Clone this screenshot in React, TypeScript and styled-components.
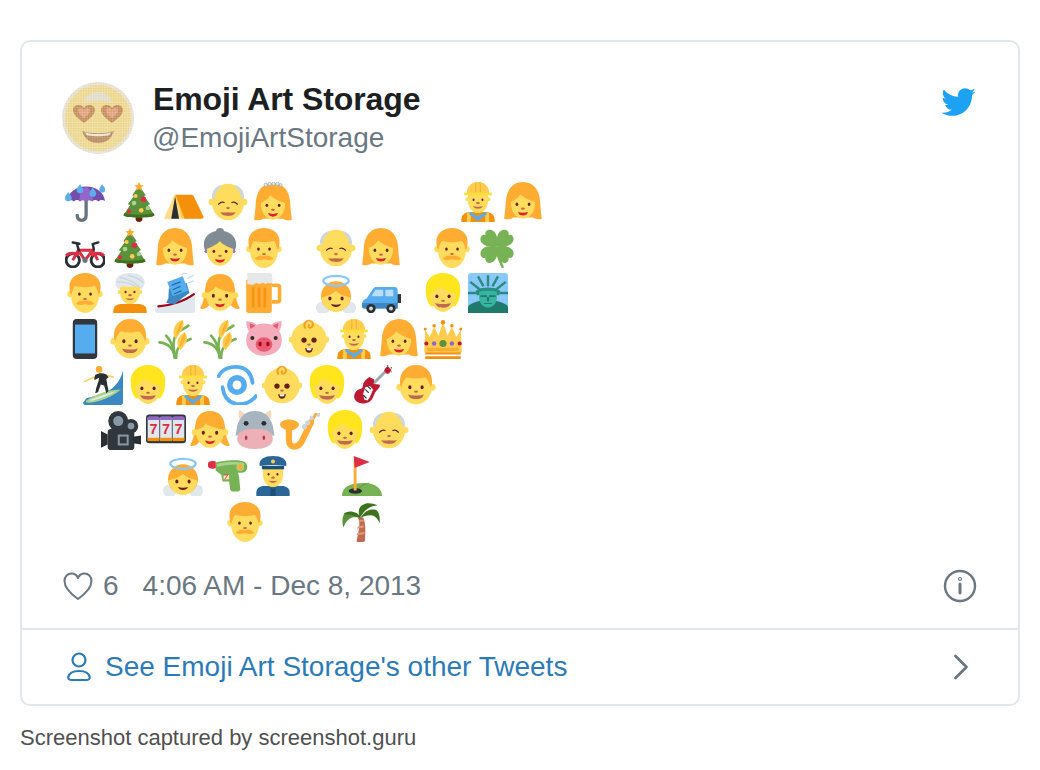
import React from 'react';
import styled, { createGlobalStyle } from 'styled-components';

const Global = createGlobalStyle`
  html, body { margin: 0; background: #fff; }
  body { font-family: "Liberation Sans", Arial, sans-serif; }
`;
const Page = styled.main`
  width: 1000px;
  padding: 40px 20px 0;
`;
const Card = styled.article`
  border: 2px solid #e1e8ed;
  border-radius: 10px;
  height: 666px;
  box-sizing: border-box;
  display: flex;
  flex-direction: column;
`;
const Content = styled.div`
  padding: 40px 40px 0;
  height: 588px;
  box-sizing: border-box;
  border-bottom: 2px solid #e1e8ed;
  flex: none;
`;
const Header = styled.header`
  display: flex;
  align-items: flex-start;
  height: 72px;
`;
const Avatar = styled.svg`
  width: 72px;
  height: 72px;
  flex: none;
`;
const Author = styled.div`
  margin-left: 18px;
  flex: 1;
`;
const Name = styled.div`
  font-size: 32px;
  line-height: 34px;
  font-weight: 700;
  letter-spacing: -0.1px;
  margin-left: 1px;
  color: #1c2022;
`;
const Handle = styled.div`
  font-size: 28px;
  line-height: 36px;
  margin-top: 4px;
  color: #697882;
`;
const Bird = styled.svg`
  width: 36px;
  height: 36px;
  margin-top: 2px;
  margin-right: 2px;
  fill: #1da1f2;
`;
const Art = styled.div`
  margin-top: 26px;
  font-size: 32px;
  line-height: 45.7px;
  white-space: pre;
  height: 368px;
`;
const ArtLine = styled.div`
  height: 45.7px;
`;
const Glyph = styled.svg`
  width: 40px;
  height: 40px;
  margin: 0 1.6px 0 3.2px;
  vertical-align: -9px;
`;
const Meta = styled.footer`
  display: flex;
  align-items: center;
  margin-top: 22px;
  height: 32px;
  font-size: 28px;
  color: #697882;
`;
const Count = styled.span`
  margin-left: 9px;
  margin-right: 24px;
`;
const Time = styled.time`
  flex: 1;
`;
const InfoIcon = styled.svg`
  margin-right: 1px;
`;
const LinkRow = styled.a`
  flex: 1;
  display: flex;
  align-items: center;
  padding: 0 49px 0 45px;
  font-size: 28px;
  color: #2b7bb9;
`;
const LinkText = styled.span`
  flex: 1;
  margin-left: 14px;
`;
const Caption = styled.p`
  margin: 20px 0 0;
  font-size: 22px;
  line-height: 24px;
  color: #505050;
`;

const SK = '#FFDC5D', HR = '#FFAC33', MO = '#C1694F', EY = '#662113', BL = '#FFE51E', LP = '#DF1F32';

const Eyes = ({ y = 20, a = 12.5, b = 23.5, r = 1.4 }: { y?: number; a?: number; b?: number; r?: number }) => (
  <g fill={EY}>
    <ellipse cx={a} cy={y} rx={r} ry={r * 1.25} />
    <ellipse cx={b} cy={y} rx={r} ry={r * 1.25} />
  </g>
);
const Smile = ({ y = 27 }: { y?: number }) => (
  <path fill={MO} d={`M11 ${y}c3 1.300 11 1.300 14 0-1 3.400-3.800 4.200-7 4.200s-6-.8-7-4.200z`} />
);
const Nose = ({ y = 24 }: { y?: number }) => <ellipse cx="18" cy={y} rx="1.700" ry="1" fill={MO} />;
const Lips = ({ y = 28 }: { y?: number }) => (
  <path fill={LP} d={`M13.500 ${y}c2.500 1 6.500 1 9 0-.6 2.200-2.200 3.200-4.500 3.200s-3.900-1-4.500-3.200z`} />
);

const Man = () => (
  <>
    <circle cx="4.800" cy="19" r="2.800" fill={SK} />
    <circle cx="31.200" cy="19" r="2.800" fill={SK} />
    <path fill={SK} d="M5.500 12h25v9c0 8-5.800 15-12.500 15S5.500 29 5.500 21z" />
    <path fill={HR} d="M18 0C10 0 4 5 4 12c0 3 .5 6 1.500 8 1-3 1.500-6 3.500-8 5 1 13 1 18 0 2 2 2.500 5 3.500 8 1-2 1.500-5 1.500-8C32 5 26 0 18 0z" />
    <Eyes y={19} a={13} b={23} r={1.200} />
    <Nose y={23.500} />
    <path fill={HR} d="M18 25.500c-2.500-1.500-6-.5-8.500 2.500 3 1.200 6.500 1 8.500 0 2 1 5.500 1.200 8.500 0-2.500-3-6-4-8.500-2.500z" />
  </>
);
const Boy = () => (
  <>
    <circle cx="3.500" cy="20" r="3.200" fill={SK} />
    <circle cx="32.500" cy="20" r="3.200" fill={SK} />
    <ellipse cx="18" cy="19" rx="14.500" ry="16.500" fill={SK} />
    <path fill={HR} d="M18 0C9 0 3.500 7 3.500 15c0 2 .5 4 1 5 1.500-4 2.500-7 5.500-9 5 1.500 11 1.500 16 0 3 2 4 5 5.500 9 .5-1 1-3 1-5C32.500 7 27 0 18 0z" />
    <Eyes y={20} />
    <Nose y={24} />
    <Smile y={26.500} />
  </>
);
const Blond = () => (
  <>
    <path fill={BL} d="M18 0C9 0 2.500 6 2.500 14c0 7 1 12 4.500 16h22c3.500-4 4.500-9 4.500-16C33.500 6 27 0 18 0z" />
    <path fill={SK} d="M6.500 19c3-1.500 6-4 7.500-7 3 3 11 5 15.500 7C29.500 29 24 35 18 35S6.500 29 6.500 19z" />
    <Eyes y={21} />
    <Nose y={25} />
    <Smile y={27} />
  </>
);
const WomanFace = () => (
  <>
    <path fill={HR} d="M18 0C8 0 3 8 2.500 18c-.3 6-1 12-1.500 15 3 1 6 .5 8-1h18c2 1.500 5 2 8 1-.5-3-1.200-9-1.500-15C33 8 28 0 18 0z" />
    <path fill={SK} d="M7 18c3.500-1.500 7-4 8.500-7 3 3 9.500 6 13.500 7 0 9-5 15-11 15S7 27 7 18z" />
    <Eyes y={20} a={12.500} b={23.500} r={1.200} />
    <Nose y={24} />
    <Lips y={27} />
  </>
);
const Woman = () => <WomanFace />;
const Princess = () => (
  <>
    <g transform="translate(0 1)"><WomanFace /></g>
    <g fill="#E1E8ED" stroke="#99AAB5" strokeWidth=".6">
      <circle cx="11.500" cy="2.500" r="1.500" />
      <circle cx="15" cy="1.700" r="1.500" />
      <circle cx="18.500" cy="1.500" r="1.500" />
      <circle cx="22" cy="1.700" r="1.500" />
      <circle cx="25" cy="2.700" r="1.300" />
    </g>
  </>
);
const OldMan = () => (
  <>
    <circle cx="3.500" cy="18" r="3" fill={SK} />
    <circle cx="32.500" cy="18" r="3" fill={SK} />
    <ellipse cx="18" cy="18" rx="14.500" ry="16.500" fill={SK} />
    <path fill="#CCD6DD" d="M3.500 13C4 7 8 3.500 12 3c-1 3-4 4-5 7-.5 2-1 4-1.500 6zM32.500 13C32 7 28 3.500 24 3c1 3 4 4 5 7 .5 2 1 4 1.500 6z" />
    <g fill="none" stroke={EY} strokeWidth="1.100" strokeLinecap="round">
      <path d="M9.500 20c1.500-1.500 3-2.500 5-1.500" />
      <path d="M26.500 20c-1.500-1.500-3-2.500-5-1.500" />
    </g>
    <Nose y={23.500} />
    <path fill={MO} d="M11 27c3 1 4.500.2 7 .2s4 .8 7-.2c-1.500 3-4 3.500-7 3.500s-5.500-.5-7-3.500z" />
  </>
);
const Granny = () => (
  <>
    <path fill="#808B93" d="M18 0c-2 0-3.500 1-3.500 2.600C8 4 3.800 8 3.500 14c-.2 3 .5 5 1.500 7h26c1-2 1.700-4 1.500-7-.3-6-4.500-10-11-11.400C21.500 1 20 0 18 0z" />
    <circle cx="5.500" cy="21" r="1.400" fill="#9266CC" />
    <circle cx="30.500" cy="21" r="1.400" fill="#9266CC" />
    <path fill={SK} d="M6 19c2-1 8-3 12-7 3 4 10 6 12 7 0 9-6 15-12 15S6 28 6 19z" />
    <Eyes y={21} a={12.500} b={23.500} r={1.200} />
    <Nose y={25} />
    <Lips y={28} />
  </>
);
const Girl = () => (
  <>
    <path fill={HR} d="M18 1C10 1 6 6 5 12L3 25c-1 3-2 5-3 7 3 1 6 0 8-3h20c2 3 5 4 8 3-1-2-2-4-3-7l-2-13C30 6 26 1 18 1z" />
    <ellipse cx="4" cy="20" rx="2.500" ry="2.800" fill={SK} />
    <ellipse cx="32" cy="20" rx="2.500" ry="2.800" fill={SK} />
    <path fill={SK} d="M5 18c3-.5 8-2.500 9-6 3 3 12 5 17 6 0 9-6 16-13 16S5 27 5 18z" />
    <Eyes y={20.500} a={12} b={24} />
    <Nose y={24} />
    <Lips y={27.500} />
  </>
);
const Baby = () => (
  <>
    <circle cx="2.500" cy="18.500" r="2.800" fill={SK} />
    <circle cx="33.500" cy="18.500" r="2.800" fill={SK} />
    <circle cx="18" cy="18.500" r="16" fill={SK} />
    <path d="M14.500 8c-2-3.500 .8-7 4-6.500 3.400.6 4 4.500 1.500 6-1.500 1-3.200-.5-2-2" fill="none" stroke="#F4900C" strokeWidth="1.700" strokeLinecap="round" opacity=".8" />
    <g fill={EY}>
      <circle cx="13.500" cy="19" r="2.400" />
      <circle cx="22.500" cy="19" r="2.400" />
    </g>
    <Nose y={23} />
    <path d="M14.500 26c2.300.7 4.700.7 7 0-.4 3-1.600 4.400-3.500 4.400s-3.100-1.400-3.500-4.400z" fill={EY} />
    <path d="M16 26.300h4v1.500c-1 .6-3 .6-4 0z" fill="#fff" />
  </>
);
const Angel = () => (
  <>
    <path fill="#E1E8ED" d="M0 31c0-3 2-5 5-5 4 0 6 3 8 5-1 3-3 6-7 6s-6-3-6-6zM36 31c0-3-2-5-5-5-4 0-6 3-8 5 1 3 3 6 7 6s6-3 6-6z" />
    <circle cx="18" cy="21" r="13.500" fill={HR} />
    <path fill={SK} d="M5 22c5-1 10-3 13-6 2 3 8 5 13 6-.5 7-6 13-13 13S5.500 29 5 22z" />
    <ellipse cx="18" cy="7" rx="11.500" ry="4.500" fill="none" stroke="#88C9F9" strokeWidth="2" />
    <Eyes y={23} a={12.500} b={23.500} r={1.400} />
    <path fill={EY} d="M13.500 28c2.500.9 6.500.9 9 0-.6 1.900-2.300 2.600-4.500 2.600s-3.900-.7-4.500-2.600z" />
  </>
);
const Worker = () => (
  <>
    <path fill="#F4900C" d="M3 36v-2c0-4 3-7 8-7h14c5 0 8 3 8 7v2z" />
    <path fill="#FFCC4D" d="M8 27.600h3.500V36H8zM24.500 27.600H28V36h-3.500z" />
    <path fill="#55ACEE" d="M11 27l7 4 7-4 1 2-8 6-8-6z" />
    <circle cx="8.500" cy="15.500" r="1.800" fill={SK} />
    <circle cx="27.500" cy="15.500" r="1.800" fill={SK} />
    <path fill={SK} d="M9 11h18v6c0 6-4 11-9 11s-9-5-9-11z" />
    <path fill="#FFCC4D" d="M18 0C12 0 8 4 8 10h20C28 4 24 0 18 0z" />
    <path fill="#E8A800" d="M15.500 .2h1v9.800h-1zM19.500 .2h1v9.800h-1z" opacity=".6" />
    <path fill="#FFDE3D" d="M5.500 9.500h25v2.500h-25z" />
    <Eyes y={16} a={14} b={22} r={.9} />
    <Nose y={19} />
    <path fill={MO} d="M13.500 21.500c2 1 7 1 9 0-1 1.800-2.500 2.500-4.500 2.500s-3.500-.7-4.500-2.500z" />
  </>
);
const Police = () => (
  <>
    <path fill="#2A6797" d="M3 36v-3c0-4 3-6 7-6h16c4 0 7 2 7 6v3z" />
    <path fill="#1C4F7A" d="M16 28l2 2 2-2 .5 8h-5z" />
    <path fill={SK} d="M9 10h18v7c0 6-4 11-9 11s-9-5-9-11z" />
    <path fill="#2A6797" d="M18 0C10 0 5 3 6 9c5-1 19-1 24 0C31 3 26 0 18 0z" />
    <path fill="#1C4F7A" d="M8 9h20v3H8z" />
    <circle cx="18" cy="5" r="1.800" fill="#FFCC4D" />
    <Eyes y={16.500} a={14} b={22} r={.9} />
    <Nose y={19.500} />
    <path fill={MO} d="M14 22c1.500.8 6.500.8 8 0-1 1.600-2.500 2-4 2s-3-.4-4-2z" />
  </>
);
const Turban = () => (
  <>
    <path fill="#F4900C" d="M3 36v-2c0-4 3-6 8-6h14c5 0 8 2 8 6v2z" />
    <circle cx="8.500" cy="17" r="1.700" fill={SK} />
    <circle cx="27.500" cy="17" r="1.700" fill={SK} />
    <path fill={SK} d="M9 11h18v6c0 6-4 11-9 11s-9-5-9-11z" />
    <path fill="#E1E8ED" d="M18 0C9 0 4 4 5 10c.3 2 2 4 3 5 1-2 2-3 3-3 4 .5 10 .5 14 0 1 0 2 1 3 3 1-1 2.700-3 3-5 1-6-4-10-13-10z" />
    <path fill="none" stroke="#CCD6DD" strokeWidth="1.200" d="M8 4c6 1 14 4 19 9M6 8c6 0 12 1 17 4M16 2c5 1 11 3 14 7" />
    <Eyes y={17} a={14} b={22} r={.9} />
    <Nose y={20} />
    <path fill={MO} d="M14 22.500c1.500.8 6.500.8 8 0-1 1.600-2.500 2-4 2s-3-.4-4-2z" />
  </>
);
const Umbrella = () => (
  <>
    <path d="M19 14v16c0 3-1.800 4.500-4 4.500S11 33 11 30" fill="none" stroke="#66757F" strokeWidth="3" strokeLinecap="round" />
    <path fill="#744EAA" d="M2 17C3 9 10 4 19 4s16 5 17 13c-2-1.200-4-1.200-6 .5-1.800-1.700-4-1.700-5.500 0-1.800-1.700-3.800-1.700-5.500 0-1.800-1.700-3.800-1.700-5.500 0-1.500-1.700-3.700-1.700-5.500 0C6 15.800 4 15.800 2 17z" />
    <path fill="#9266CC" d="M19 4c-4 2-6.500 8-6 13.500 2-1.400 3.500-1.400 6 0 2.500-1.400 4-1.400 6 0C25.500 12 23 6 19 4z" />
    <g fill="#5DADEC">
      <path d="M3 9c1 1.800 3 3.300 3 5.300a3 3 0 1 1-6 0C0 12.300 2 10.800 3 9z" />
      <path d="M13.500 2c1 1.800 3 3.300 3 5.300a3 3 0 1 1-6 0c0-2 2-3.500 3-5.300z" />
      <path d="M25 5c1 1.800 3 3.300 3 5.300a3 3 0 1 1-6 0C22 8.300 24 6.800 25 5z" />
      <path d="M33.500 2c.9 1.600 2.700 3 2.700 4.800a2.700 2.700 0 1 1-5.400 0c0-1.800 1.800-3.200 2.700-4.800z" />
    </g>
  </>
);
const Tree = () => (
  <>
    <path fill="#662113" d="M15 29h6v4.500c0 1.400-1.300 2.500-3 2.500s-3-1.100-3-2.500z" />
    <path fill="#5C913B" d="M18 3l6 9-1.500.5L28 20l-2 .7L32 30c-1 1.500-7 2-14 2S5 31.500 4 30l6-9.300-2-.7 5.500-7.500L12 12z" />
    <path fill="#3E721D" d="M4 30c1 1.500 7 2 14 2s13-.5 14-2l-1-2c-3 1-8 1.500-13 1.500S8 29 5 28z" />
    <path fill="#FFAC33" d="M18 0l1.300 2.700 2.900.3-2.200 2 .7 2.900L18 6.300l-2.700 1.600.7-2.900-2.200-2 2.900-.3z" />
    <circle cx="15" cy="12.500" r="1.800" fill="#FFCC4D" />
    <circle cx="22" cy="15.500" r="2.500" fill="#DD2E44" />
    <circle cx="13.500" cy="19" r="2.100" fill="#A6D388" />
    <circle cx="26" cy="23.500" r="2" fill="#A6D388" />
    <circle cx="9" cy="26.500" r="1.900" fill="#DD2E44" />
    <circle cx="20" cy="25.500" r="2.100" fill="#FFCC4D" />
  </>
);
const Tent = () => (
  <>
    <path fill="#FFCC4D" d="M0 33l9.500-21.500h2L22 33z" />
    <path fill="#FFE8B6" d="M0 33l9.500-21.500-3 21.500zM9.500 11.500l4 21.500h3z" opacity=".6" />
    <path fill="#292F33" d="M10 13l-3.500 20h7z" />
    <path fill="#F4900C" d="M10.500 11.500h14c1 0 2 .5 2.400 1.500L35.500 31c.4 1-.3 2-1.500 2H18.500z" />
  </>
);
const Bike = () => (
  <>
    <g fill="none" stroke="#292F33" strokeWidth="2.600">
      <circle cx="7" cy="29" r="6" />
      <circle cx="29.500" cy="29" r="6" />
    </g>
    <path fill="none" stroke="#DD2E44" strokeWidth="2.600" d="M7 29l5-9h13l4.500 9M12 20l6 9 7-9" />
    <path fill="none" stroke="#DD2E44" strokeWidth="2.800" d="M1 25c2-3 9-3 11 0M24 25c2-3 9-3 11 0" />
    <path fill="none" stroke="#292F33" strokeWidth="2.200" strokeLinecap="round" d="M7 13l6 1.200M11 15.500l1.500 4.500M30 13l-5 1.500 1 5" />
    <circle cx="18" cy="29" r="2.300" fill="#66757F" />
  </>
);
const Clover = () => (
  <>
    <path fill="none" stroke="#77B255" strokeWidth="2.200" strokeLinecap="round" d="M18 18c0 5 2 11 5 17" />
    {[45, 135, 225, 315].map((a) => (
      <path key={a} transform={`rotate(${a} 18 16.500)`} fill="#77B255" d="M18 16.500C14 13 10.500 10 10.500 5.500 10.500 2 13 0 15 0c1.300 0 2.500.7 3 2 .5-1.300 1.700-2 3-2 2 0 4.500 2 4.500 5.500 0 4.500-3.500 7.500-7.500 11z" />
    ))}
  </>
);
const SkiBoot = () => (
  <>
    <path fill="#E1E8ED" d="M0 32l36-13v15c0 1.200-1 2-2 2H2c-1.200 0-2-.8-2-2z" />
    <path fill="none" stroke="#A0041E" strokeWidth="2" strokeLinecap="round" d="M3 30c11-.5 24-5 32-11" />
    <path fill="#3B88C3" d="M10 27l2-4 .5-9 16-5 2.500 9-7 5-6 5z" />
    <path fill="#55ACEE" d="M11 8l14-5 5 13-14 5z" />
    <path fill="none" stroke="#226699" strokeWidth="1" d="M15 11l8-3M16 15l7-3M17 19l7-3" />
    <path fill="none" stroke="#BBDDF5" strokeWidth="1.100" d="M24 1l5-1M29 5l6-3M30 9l5-2" />
  </>
);
const Beer = () => (
  <>
    <path fill="none" stroke="#FFAC33" strokeWidth="3.200" d="M25 11h5c1.300 0 2 .7 2 2v11c0 1.300-.7 2-2 2h-5" />
    <path fill="#FFAC33" d="M2 6h23v28c0 1.200-1 2-2 2H4c-1 0-2-.8-2-2z" />
    <path fill="#F4900C" d="M7 13h2.500v18H7zM12.300 13h2.500v18h-2.500zM17.500 13H20v18h-2.500z" opacity=".8" />
    <path fill="#E6E7E8" d="M4 0h19c1.500 0 2.500 1 2.500 2.500v6c-1.500 1-2.800 1-4 0-1 2-3.500 1.500-4.500 0-1.500 1.500-5 1.500-6 0-1 1.500-4 3-8 1.500v-8C2 1 2.800 0 4 0z" />
  </>
);
const Car = () => (
  <>
    <path fill="#31373D" d="M32 19h4v8h-4z" />
    <path fill="#55ACEE" d="M1 30c-.5-4 1-6 4-7l6-9c.7-1 1.500-1.500 3-1.500h16c2 0 3 1 3 3V32H3c-1.200 0-2-.8-2-2z" />
    <path fill="#3B88C3" d="M1 27h32v5H3c-1.200 0-2-.8-2-2z" />
    <path fill="#BBDDF5" d="M13 15h7v6H9.500zM22 15h6c.8 0 1 .5 1 1v5h-7z" />
    <circle cx="9" cy="32" r="4.200" fill="#292F33" />
    <circle cx="9" cy="32" r="1.800" fill="#CCD6DD" />
    <circle cx="27" cy="32" r="4.200" fill="#292F33" />
    <circle cx="27" cy="32" r="1.800" fill="#CCD6DD" />
  </>
);
const Liberty = () => (
  <>
    <rect width="36" height="36" rx="3" fill="#88C9F9" />
    <g fill="none" stroke="#2A8C7E" strokeWidth="2.200">
      <path d="M18 12V2M14 12L9 3M22 12l5-9M11 15L2 8M25 15l9-7M9 18H0M27 18h9" />
    </g>
    <path fill="#2A8C7E" d="M7 16c5-4 17-4 22 0l-1 4H8z" />
    <path fill="#1F7A6B" d="M0 36v-5c0-3 7-5 11-6h14c4 1 11 3 11 6v5z" />
    <path fill="#36B5A0" d="M10 17c4-1.500 12-1.500 16 0v5c0 5-3.500 9-8 9s-8-4-8-9z" />
    <path fill="#1F7A6B" d="M11 20h6v1.500h-6zM19 20h6v1.500h-6zM17 21.500h2v4h-2zM14.500 27h7v1h-7z" />
  </>
);
const Phone = () => (
  <>
    <rect x="7" y="0" width="22" height="36" rx="3.500" fill="#31373D" />
    <rect x="9" y="5" width="18" height="26" fill="#55ACEE" />
  </>
);
const Rice = () => (
  <>
    <g fill="none" stroke="#77B255" strokeWidth="2.400" strokeLinecap="round">
      <path d="M18 35C17 28 15 20 19 14c3-4 7-5 11-8" />
      <path d="M18 35c-1-7-5-13-14-14" />
      <path d="M19 35c0-8 3-13 13-17" />
      <path d="M18 35c-1-9-3-15-8-20" />
    </g>
    <path fill="#FFCC4D" d="M17 15c-1.500-6 2-13 8-14 2 4 0 9-3 12l-3 5z" />
    <path fill="#F4900C" d="M19 15c1-5 3-10 6-14-1 5-1 9-6 14z" opacity=".5" />
    <path fill="#FFCC4D" d="M21 26c-2-6 0-11 6-14 2.500 4 2.500 8-1 12l-3 4z" />
    <path fill="#F4900C" d="M22 26c.5-5 2-10 5-14 .5 5 0 9-5 14z" opacity=".4" />
  </>
);
const Pig = () => (
  <>
    <path fill="#F4ABBA" d="M18 4C8 4 2 11 2 19c0 9 7 14 16 14s16-5 16-14c0-8-6-15-16-15z" />
    <path fill="#F4ABBA" d="M2 2c4 0 8 1 10 4l-7 6C3 9 2 6 2 2zM34 2c-4 0-8 1-10 4l7 6c2-3 3-6 3-10z" />
    <path fill="#EA596E" d="M5 4c2 0 4 1 5 2L6 9C5.500 7 5 6 5 4zM31 4c-2 0-4 1-5 2l4 3c.5-2 1-3 1-5z" />
    <circle cx="7.500" cy="17" r="1.800" fill="#292F33" />
    <circle cx="28.500" cy="17" r="1.800" fill="#292F33" />
    <ellipse cx="18" cy="23" rx="7.500" ry="6.500" fill="#EA596E" />
    <ellipse cx="14.500" cy="22.500" rx="1.500" ry="2" fill="#A0041E" />
    <ellipse cx="21.500" cy="22.500" rx="1.500" ry="2" fill="#A0041E" />
  </>
);
const Crown = () => (
  <>
    <path fill="#FFCC4D" d="M2 10l4 6 4-9 4 8 4-13 4 13 4-8 4 9 4-6 1 20H1z" />
    <path fill="#F4900C" d="M2 30h32v2H2zM2 33.500h32V36H2z" />
    <path fill="#FFAC33" d="M4 26h28v3H4z" />
    <g fill="#F4900C">
      <circle cx="18" cy="3" r="2" />
      <circle cx="10" cy="6" r="1.600" />
      <circle cx="26" cy="6" r="1.600" />
      <circle cx="2" cy="9" r="1.400" />
      <circle cx="34" cy="9" r="1.400" />
    </g>
    <circle cx="18" cy="22" r="3.200" fill="#5C913B" />
    <circle cx="10" cy="22" r="2" fill="#9266CC" />
    <circle cx="26" cy="22" r="2" fill="#9266CC" />
    <circle cx="3" cy="22" r="1.800" fill="#BE1931" />
    <circle cx="33" cy="22" r="1.800" fill="#BE1931" />
  </>
);
const Surfer = () => (
  <>
    <path fill="#3B88C3" d="M36 5v29c0 1.200-1 2-2 2H2c-1.200 0-2-1-2-2l3-4 15-4C26 23 34 15 36 5z" />
    <path fill="#A6D388" d="M3 32c8-6 21-10 31-10-6 6-19 11-28 12-3 .4-4-1-3-2z" />
    <path fill="#E1E8ED" d="M6 31.500c7-3 17-6 24-8-6 4-15 7-22 9z" />
    <path fill="none" stroke="#FFCC4D" strokeWidth="1.300" d="M1 15L12 10M20 9l8 2" />
    <path fill="#292F33" d="M11 9c3-2 7-2 10-.5L23 11l-2 1.500 1 6 1 5-2 2-2-7-3-1-2.500 7-2.500 1 1-5 2-6 .5-3-4 2-.5-1z" />
    <circle cx="14.500" cy="4" r="3" fill="#FFAC33" />
  </>
);
const Cyclone = () => (
  <g fill="none" stroke="#55ACEE" strokeLinecap="round">
    <circle cx="18" cy="18" r="6.500" strokeWidth="5" />
    <path strokeWidth="3.400" d="M1.500 10C5 3 13 1 20 2c7 1.200 11 6 12 14" />
    <path strokeWidth="3.400" d="M35 28c-4 6-12 8-18 7-7-1.500-11-7-12-15" />
  </g>
);
const Guitar = () => (
  <>
    <path fill="none" stroke="#99AAB5" strokeWidth="2.600" d="M16 20L31 5" />
    <path fill="#BE1931" d="M32 1l3.500 3.500-2 3-2 .5-2.500-2.500.5-2z" />
    <g fill="#66757F"><circle cx="32" cy="0.800" r=".8" /><circle cx="35.500" cy="2.500" r=".8" /><circle cx="36" cy="6" r=".7" /></g>
    <path fill="#BE1931" d="M16 11l4 2c.5 1-1 3-.5 4l5 .5c1 .3.7 2-.5 3.500-1.500 2-3 3-4 5.500-1.500 4-3 7-8 8-4 .7-9-1-10-5-.5-3 1-5 2.500-6.500 2-2 4-1 5-3 .8-1.500 0-3 1.500-5 1-1.500 3.500-3.500 5-4.500z" />
    <path fill="#fff" d="M12 20l4-1 3 3-3 7-2 3-3-1-1-5z" />
    <path fill="none" stroke="#292F33" strokeWidth="1" d="M12 22l3 3M10 27l3 3M14 19l3 3" />
  </>
);
const Camera = () => (
  <>
    <path fill="#292F33" d="M0 19l6 3v9l-6 3z" />
    <rect x="6" y="17" width="24" height="19" rx="3" fill="#31373D" />
    <path fill="#292F33" d="M29 24l7-1v8l-7-1z" />
    <circle cx="15.500" cy="10" r="9" fill="#31373D" />
    <circle cx="15.500" cy="10" r="4.500" fill="#8899A6" />
    <circle cx="27" cy="14.500" r="6.500" fill="#31373D" />
    <circle cx="27" cy="14.500" r="3" fill="#8899A6" />
    <rect x="16" y="23" width="8" height="8" fill="none" stroke="#8899A6" strokeWidth="1.800" />
  </>
);
const Reel = styled.text`
  font-family: "Liberation Sans", sans-serif;
  font-size: 13px;
  font-weight: 700;
  fill: #DD2E44;
  text-anchor: middle;
`;
const Slot = () => (
  <>
    <rect x="0" y="4" width="36" height="26" rx="3" fill="#31373D" />
    {[1.500, 12.750, 24].map((x) => (
      <g key={x}>
        <rect x={x} y="6" width="10.500" height="22" rx="1.500" fill="#E1E8ED" />
        <rect x={x} y="6" width="10.500" height="3" fill="#9266CC" />
        <rect x={x} y="25" width="10.500" height="3" fill="#F4900C" />
        <Reel x={x + 5.250} y="21.500">7</Reel>
      </g>
    ))}
  </>
);
const Cow = () => (
  <>
    <path fill="#F5D9BE" d="M4 8C3 5 3 2 4 0c2 1 6 4 8 7zM32 8c1-3 1-6 0-8-2 1-6 4-8 7z" />
    <path fill="#A8B5BF" d="M18 1C10 1 5 5 2 14l-1.500 9h35L34 14C31 5 26 1 18 1z" />
    <circle cx="10" cy="12" r="2.200" fill="#292F33" />
    <circle cx="26" cy="12" r="2.200" fill="#292F33" />
    <path fill="#EDB0B6" d="M18 17c-8 0-16 1-16 9 0 6 7 9 16 9s16-3 16-9c0-8-8-9-16-9z" />
    <ellipse cx="10" cy="25" rx="1.200" ry="2" fill="#A0041E" opacity=".7" />
    <ellipse cx="26" cy="25" rx="1.200" ry="2" fill="#A0041E" opacity=".7" />
  </>
);
const Sax = () => (
  <>
    <path fill="none" stroke="#FFAC33" strokeWidth="5.500" strokeLinecap="round" d="M8 17v10c0 4 2 6 5 6s5-2 6.500-4.500L28 11" />
    <path fill="#FFAC33" d="M0 13c0-2.500 4-4.500 8-4.500s9 2 9 4.500-4 5.500-8 5.500-9-3-9-5.500z" />
    <path fill="none" stroke="#FFAC33" strokeWidth="2.600" d="M28 11l4-7h4" />
    <g fill="#CCD6DD"><circle cx="22" cy="15" r="2.300" /><circle cx="25" cy="11.500" r="2.300" /><circle cx="28.500" cy="7" r="2" /><circle cx="34.500" cy="4.500" r="1.700" /></g>
  </>
);
const Pistol = () => (
  <>
    <path fill="#77B255" d="M7 6c6-2 20-3 25-1 3 1 4 4 3 7-1 2-2 3-4 3h-4l1 4 1 11c0 1-1 2-2 2h-5c-1 0-2-1-2-2l-1-7H13l-1-6-5-4z" />
    <path fill="#A6D388" d="M8 7c7-2 18-2 24-1l1 2C24 7 15 8 8 10z" />
    <path fill="#DD2E44" d="M0 7c0-2 3-3 7-2v6c-4 1-7 0-7-2z" />
    <circle cx="29" cy="10" r="3" fill="#FFAC33" stroke="#A6D388" />
    <path fill="#FFE8B6" d="M14 17h5v4h-5z" />
    <path fill="none" stroke="#DD2E44" strokeWidth=".8" d="M14 17h4M15 21l3-4" />
  </>
);
const Flag = () => (
  <>
    <path fill="#77B255" d="M0 36c0-6 4-10 12-11 8-1.500 16-1 20 3 2.500 2 4 5 4 8z" />
    <path fill="#5C913B" d="M14 30c2-3 6-5 10-6l1 .3c-4 1-8 3-10 6z" />
    <ellipse cx="12" cy="31.500" rx="6" ry="2.500" fill="#292F33" />
    <rect x="10.500" y="3" width="2.600" height="28" fill="#FFAC33" />
    <path fill="#DD2E44" d="M10.500 0L25 5.500 11.500 10.500z" />
  </>
);
const Palm = () => (
  <>
    <path fill="#C1694F" d="M15 14c3 5 1 12-1 21 0 1.500 6 1.500 7.500 0 .5-8 1-15-1.500-21z" />
    <path fill="#D99E82" d="M19.500 16l1.500 1-5 1 .5-2zM20.500 21v2l-6 1 .5-2zM21 27v2l-7 1 .5-2z" />
    <path fill="#3E721D" d="M17 15c4-7 9-9 14-8 3 1 4 5 4 12-2-4-5-7-8-7-4 0-7 1-10 3z" />
    <path fill="#5C913B" d="M18 14C13 9 7 9 3 11c-2 2-2 7-1 12 2-5 5-8 8-9 3-.5 5 0 8 0z" />
    <path fill="#3E721D" d="M17 14c-2-5-1-9 2-11 4-3 9-2 14 0-3 .5-6 1-9 3-3 2-5 5-7 8zM2 11c3-3 8-3 12-1 2 1 3 3 4 5-4-2-9-4-16-4z" />
  </>
);

const ICONS: Record<string, () => React.JSX.Element> = {
  a: Umbrella, t: Tree, c: Tent, o: OldMan, p: Princess, w: Worker, f: Woman, b: Bike, g: Granny, m: Man,
  l: Clover, k: SkiBoot, i: Girl, e: Beer, n: Angel, r: Car, y: Blond, u: Liberty, h: Phone, B: Boy,
  R: Rice, P: Pig, K: Baby, C: Crown, S: Surfer, Y: Cyclone, G: Guitar, V: Camera, L: Slot, W: Cow,
  X: Sax, Q: Pistol, O: Police, F: Flag, D: Palm, T: Turban,
};

const ROWS = [
  'a tcop                  wf',
  'btfgm   of   ml',
  'mTkie   nr  yu',
  'hBRRPKwfC',
  '  SywYKyGB',
  '    VLiWXyo',
  '           nQO     F',
  '                  m        D',
];

const Emoji = ({ name }: { name: string }) => {
  const Drawing = ICONS[name];
  return (
    <Glyph viewBox="0 0 36 36" aria-hidden="true">
      <Drawing />
    </Glyph>
  );
};

const App = () => (
  <>
    <Global />
    <Page>
      <Card>
        <Content>
          <Header>
            <Avatar viewBox="0 0 72 72">
              <defs>
                <pattern id="mosaic" width="2.500" height="2.500" patternUnits="userSpaceOnUse">
                  <path d="M0 0h2.500M0 0v2.500" stroke="#fff" strokeOpacity=".4" strokeWidth=".7" />
                  <circle cx="1.250" cy="1.250" r=".5" fill="#b99b5c" fillOpacity=".25" />
                </pattern>
                <clipPath id="round"><circle cx="36" cy="36" r="36" /></clipPath>
              </defs>
              <circle cx="36" cy="36" r="36" fill="#e6e0d2" />
              <circle cx="36" cy="36" r="33" fill="#eed88f" />
              <path d="M22 21c2-8 8-11 14-11s12 3 14 11c-8-3-20-3-28 0z" fill="#e2dccb" />
              <path d="M22 41c-5-4-11-8-11-13 0-5 8-7 11-2 3-5 11-3 11 2 0 5-6 9-11 13z" fill="#c48a55" />
              <path d="M22 36c-3-2-6-5-6-8 0-2 4-3 6 0 2-3 6-2 6 0 0 3-3 6-6 8z" fill="#e0a17c" />
              <path d="M50 41c-5-4-11-8-11-13 0-5 8-7 11-2 3-5 11-3 11 2 0 5-6 9-11 13z" fill="#c48a55" />
              <path d="M50 36c-3-2-6-5-6-8 0-2 4-3 6 0 2-3 6-2 6 0 0 3-3 6-6 8z" fill="#e0a17c" />
              <path d="M20 49c10 3 22 3 32 0-3 9-9 12-16 12s-13-3-16-12z" fill="#b68a5f" />
              <path d="M23 50.500c8 2 18 2 26 0-1 2-2 3-3 3-6 1-14 1-20 0-1 0-2-1-3-3z" fill="#efe8d6" />
              <rect width="72" height="72" fill="url(#mosaic)" clipPath="url(#round)" />
            </Avatar>
            <Author>
              <Name>Emoji Art Storage</Name>
              <Handle>@EmojiArtStorage</Handle>
            </Author>
            <Bird viewBox="0 0 24 24">
              <path d="M23.643 4.937c-.835.37-1.732.62-2.675.733.962-.576 1.7-1.49 2.048-2.578-.9.534-1.897.922-2.958 1.13-.85-.904-2.06-1.47-3.4-1.47-2.572 0-4.658 2.086-4.658 4.66 0 .364.042.718.12 1.06-3.873-.195-7.304-2.05-9.602-4.868-.4.69-.63 1.49-.63 2.342 0 1.616.823 3.043 2.072 3.878-.764-.025-1.482-.234-2.11-.583v.06c0 2.257 1.605 4.14 3.737 4.568-.392.106-.803.162-1.227.162-.3 0-.593-.028-.877-.082.593 1.85 2.313 3.198 4.352 3.234-1.595 1.25-3.604 1.995-5.786 1.995-.376 0-.747-.022-1.112-.065 2.062 1.323 4.51 2.093 7.14 2.093 8.57 0 13.255-7.098 13.255-13.254 0-.2-.005-.402-.014-.602.91-.658 1.7-1.477 2.323-2.41z" />
            </Bird>
          </Header>
          <Art>
            {ROWS.map((row, i) => (
              <ArtLine key={i}>
                {row.split('').map((ch, j) => (ch === ' ' ? ' ' : <Emoji key={j} name={ch} />))}
              </ArtLine>
            ))}
          </Art>
          <Meta>
            <svg width="32" height="32" viewBox="0 0 32 32" fill="none" stroke="#697882" strokeWidth="2" strokeLinejoin="round">
              <path d="M16 29C9 24 2.500 18 2.500 11c0-4.500 3.300-7.500 7-7.500 3 0 5.300 1.700 6.500 4.500 1.200-2.800 3.500-4.500 6.500-4.500 3.700 0 7 3 7 7.500 0 7-6.500 13-13.500 18z" />
            </svg>
            <Count>6</Count>
            <Time>4:06 AM - Dec 8, 2013</Time>
            <InfoIcon width="34" height="34" viewBox="0 0 34 34" fill="none" stroke="#697882" strokeWidth="2.400" strokeLinecap="round">
              <circle cx="17" cy="17" r="15" />
              <path d="M17 15v9" strokeWidth="3" />
              <circle cx="17" cy="10" r=".6" strokeWidth="3" />
            </InfoIcon>
          </Meta>
        </Content>
        <LinkRow>
          <svg width="24" height="30" viewBox="0 0 24 30" fill="none" stroke="#2b7bb9" strokeWidth="2.200">
            <circle cx="12" cy="8" r="6.500" />
            <path d="M5 28c-2.500 0-4-1-3.700-3 .7-3.500 4.700-6 10.700-6s10 2.500 10.700 6c.3 2-1.200 3-3.700 3z" />
          </svg>
          <LinkText>See Emoji Art Storage's other Tweets</LinkText>
          <svg width="16" height="26" viewBox="0 0 16 26" fill="none" stroke="#697882" strokeWidth="2.800" strokeLinecap="round" strokeLinejoin="round">
            <path d="M2.500 2l11 11-11 11" />
          </svg>
        </LinkRow>
      </Card>
      <Caption>Screenshot captured by screenshot.guru</Caption>
    </Page>
  </>
);

export default App;
